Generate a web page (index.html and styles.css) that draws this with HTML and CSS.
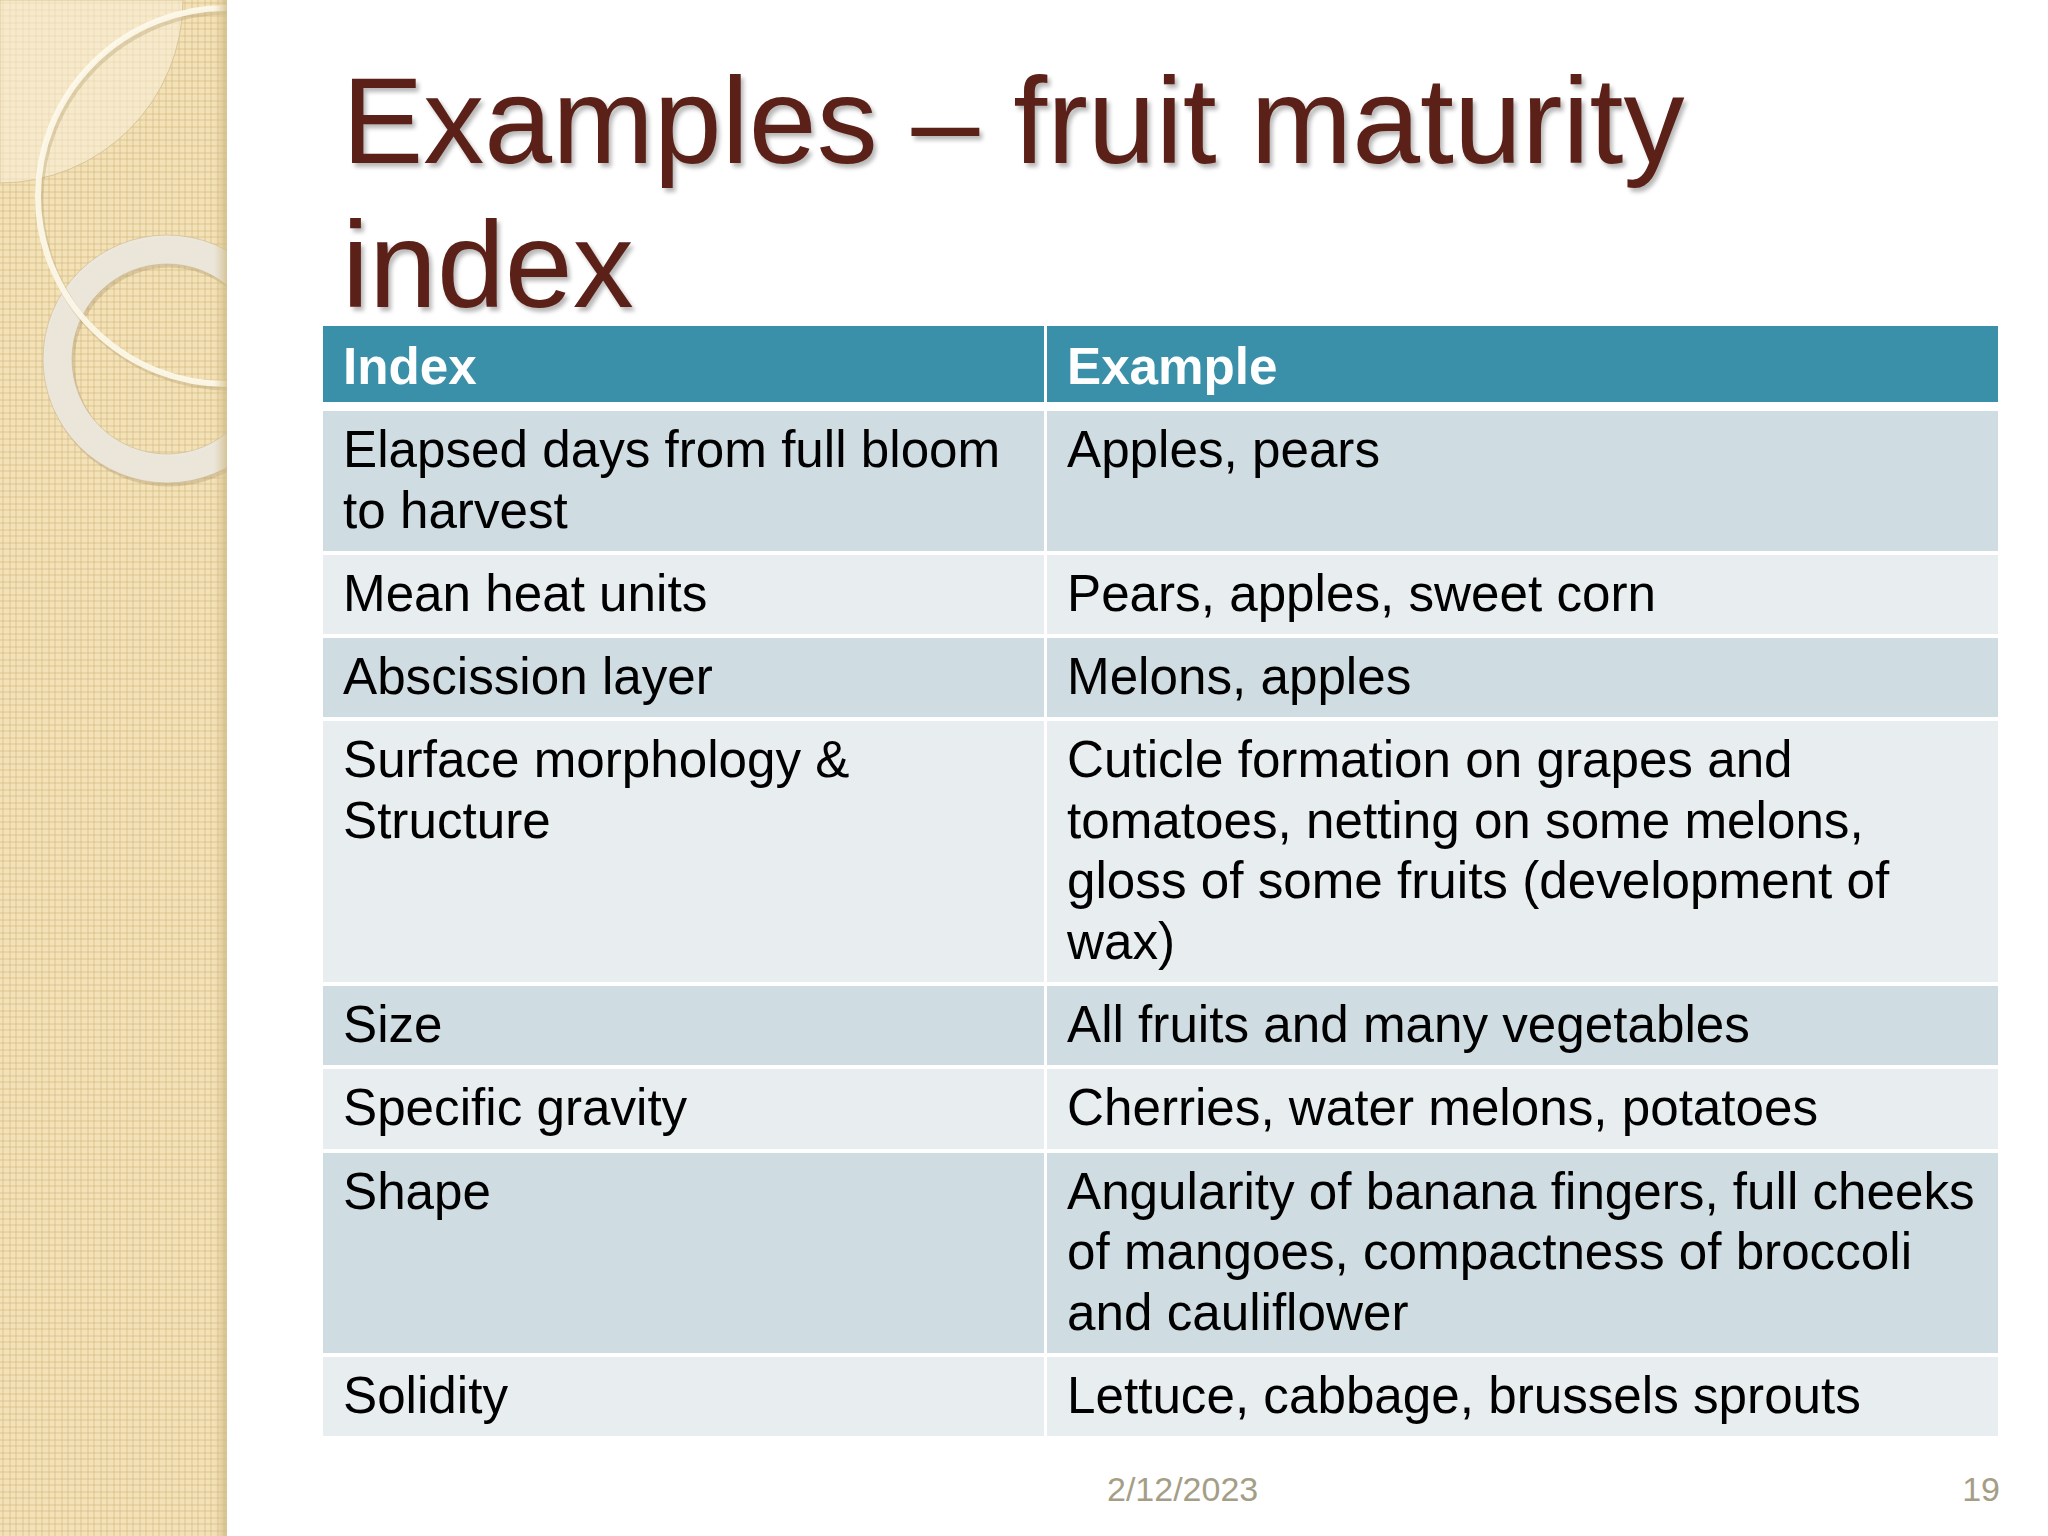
FILE: index.html
```html
<!DOCTYPE html>
<html lang="en">
<head>
<meta charset="utf-8">
<title>Examples – fruit maturity index</title>
<link rel="stylesheet" href="styles.css">
</head>
<body>
<div class="slide">
  <aside class="strip">
    <svg class="strip-art" width="227" height="1536" viewBox="0 0 227 1536" xmlns="http://www.w3.org/2000/svg">
      <defs>
        <linearGradient id="edge" x1="0" y1="0" x2="1" y2="0">
          <stop offset="0" stop-color="#d8c390" stop-opacity="0"/>
          <stop offset="1" stop-color="#cdb984" stop-opacity="0.75"/>
        </linearGradient>
      </defs>
      <path d="M0,0 L183,0 A183,183 0 0 1 0,183 Z" fill="#fbf3df" fill-opacity="0.5" stroke="#d9c597" stroke-width="1"/>
      <circle cx="169" cy="362" r="109.5" fill="none" stroke="#a8956a" stroke-opacity="0.35" stroke-width="30"/>
      <circle cx="167" cy="359" r="109.5" fill="none" stroke="#ece8dd" stroke-opacity="0.95" stroke-width="29"/>
      <circle cx="167" cy="359" r="124" fill="none" stroke="#cbb890" stroke-opacity="0.6" stroke-width="1"/>
      <circle cx="167" cy="359" r="95" fill="none" stroke="#cbb890" stroke-opacity="0.6" stroke-width="1"/>
      <circle cx="228" cy="199" r="188" fill="none" stroke="#b9a576" stroke-opacity="0.4" stroke-width="7"/>
      <circle cx="226" cy="196" r="188" fill="none" stroke="#fdf8ea" stroke-opacity="0.92" stroke-width="6"/>
      <rect x="214" y="0" width="13" height="1536" fill="url(#edge)"/>
    </svg>
  </aside>
  <main class="content">
    <h1 class="title">Examples – fruit maturity index</h1>
    <div class="table">
      <div class="cell head">Index</div>
      <div class="cell head">Example</div>

      <div class="cell odd">Elapsed days from full bloom to harvest</div>
      <div class="cell odd">Apples, pears</div>

      <div class="cell even">Mean heat units</div>
      <div class="cell even">Pears, apples, sweet corn</div>

      <div class="cell odd">Abscission layer</div>
      <div class="cell odd">Melons, apples</div>

      <div class="cell even">Surface morphology &amp; Structure</div>
      <div class="cell even">Cuticle formation on grapes and tomatoes, netting on some melons, gloss of some fruits (development of wax)</div>

      <div class="cell odd">Size</div>
      <div class="cell odd">All fruits and many vegetables</div>

      <div class="cell even">Specific gravity</div>
      <div class="cell even">Cherries, water melons, potatoes</div>

      <div class="cell odd">Shape</div>
      <div class="cell odd">Angularity of banana fingers, full cheeks of mangoes, compactness of broccoli and cauliflower</div>

      <div class="cell even">Solidity</div>
      <div class="cell even">Lettuce, cabbage, brussels sprouts</div>
    </div>
    <footer class="footer">
      <span class="date">2/12/2023</span>
      <span class="num">19</span>
    </footer>
  </main>
</div>
</body>
</html>
```

FILE: styles.css
```css
html, body {
  margin: 0;
  padding: 0;
  background: #ffffff;
}

body {
  width: 2048px;
  height: 1536px;
  overflow: hidden;
  font-family: "Liberation Sans", Arial, sans-serif;
}

.slide {
  display: flex;
  width: 2048px;
  height: 1536px;
}

.strip {
  flex: 0 0 227px;
  width: 227px;
  height: 1536px;
  overflow: hidden;
  background-color: #f3e1b8;
  background-image:
    linear-gradient(90deg, transparent 0 2px, rgba(204, 172, 112, 0.26) 2px 4px, transparent 4px 9px, rgba(204, 172, 112, 0.26) 9px 11px, transparent 11px),
    linear-gradient(transparent 0 2px, rgba(204, 172, 112, 0.26) 2px 4px, transparent 4px 9px, rgba(204, 172, 112, 0.26) 9px 11px, transparent 11px);
  background-size: 13px 13px, 13px 13px;
}

.strip-art {
  display: block;
}

.content {
  flex: 1 1 auto;
  padding: 49px 0 0 96px;
  display: flex;
  flex-direction: column;
}

.title {
  margin: 0 0 -11px 19px;
  width: 1560px;
  font-family: "Liberation Sans", Arial, sans-serif;
  font-weight: normal;
  font-size: 122px;
  line-height: 144px;
  color: #5b2118;
  text-shadow: 3px 4px 4px rgba(0, 0, 0, 0.28);
}

.table {
  display: grid;
  grid-template-columns: 721px 951px;
  column-gap: 3px;
  row-gap: 4px;
  width: 1675px;
}

.cell {
  padding: 9px 20px 9.3px;
  font-size: 51.2px;
  line-height: 60.8px;
  color: #000000;
}

.cell.head {
  padding: 11px 20px 4px;
  margin-bottom: 5px;
  background: #3a8fa9;
  color: #ffffff;
  font-weight: bold;
}

.cell.odd {
  background: #cfdce1;
}

.cell.even {
  background: #e8edf0;
}

.footer {
  display: flex;
  justify-content: space-between;
  width: 1677px;
  margin-top: 33px;
  font-size: 34px;
  line-height: 40px;
  color: #a59e86;
}

.date {
  margin-left: 784px;
}
```
